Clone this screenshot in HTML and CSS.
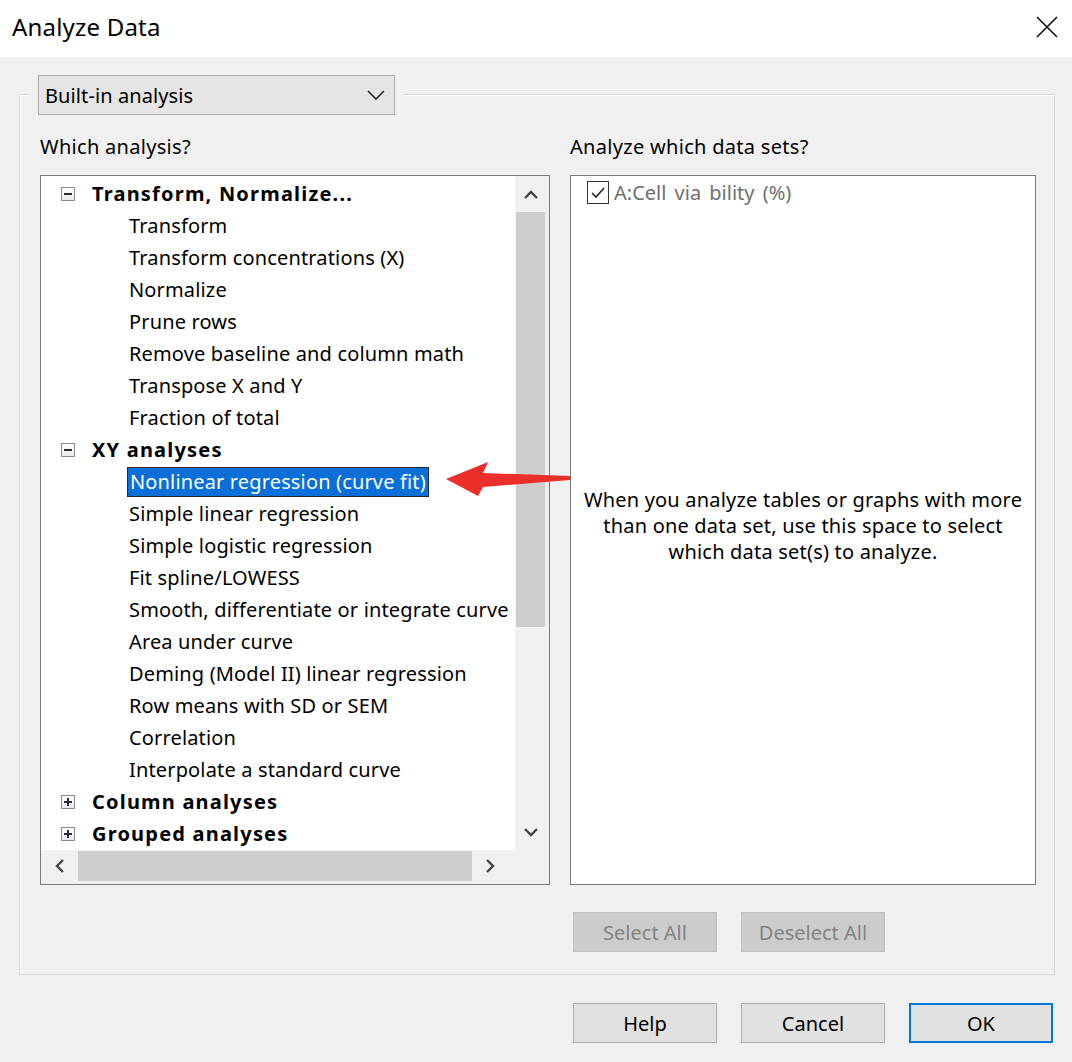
FILE: index.html
```html
<!DOCTYPE html>
<html>
<head>
<meta charset="utf-8">
<title>Analyze Data</title>
<link rel="stylesheet" href="styles.css">
</head>
<body>
<div class="window">
  <div class="titlebar">
    <span class="title">Analyze Data</span>
    <svg class="close" width="22" height="22" viewBox="0 0 22 22"><path d="M1 1 L21 21 M21 1 L1 21" stroke="#111" stroke-width="1.6" fill="none"/></svg>
  </div>
  <div class="body">
    <div class="group">
      <div class="combo-wrap">
        <div class="combo">
          <span>Built-in analysis</span>
          <svg width="18" height="10" viewBox="0 0 18 10"><path d="M1 1 L9 9 L17 1" stroke="#222" stroke-width="1.5" fill="none"/></svg>
        </div>
      </div>
      <div class="columns">
        <div class="col">
          <div class="label">Which analysis?</div>
          <div class="listbox tree-box">
            <div class="tree">
              <div class="row head"><span class="tog minus"></span>Transform, Normalize...</div>
              <div class="row child">Transform</div>
              <div class="row child">Transform concentrations (X)</div>
              <div class="row child">Normalize</div>
              <div class="row child">Prune rows</div>
              <div class="row child">Remove baseline and column math</div>
              <div class="row child">Transpose X and Y</div>
              <div class="row child">Fraction of total</div>
              <div class="row head"><span class="tog minus"></span>XY analyses</div>
              <div class="row child"><span class="sel">Nonlinear regression (curve fit)</span></div>
              <div class="row child">Simple linear regression</div>
              <div class="row child">Simple logistic regression</div>
              <div class="row child">Fit spline/LOWESS</div>
              <div class="row child">Smooth, differentiate or integrate curve</div>
              <div class="row child">Area under curve</div>
              <div class="row child">Deming (Model II) linear regression</div>
              <div class="row child">Row means with SD or SEM</div>
              <div class="row child">Correlation</div>
              <div class="row child">Interpolate a standard curve</div>
              <div class="row head"><span class="tog plus"></span>Column analyses</div>
              <div class="row head"><span class="tog plus"></span>Grouped analyses</div>
            </div>
            <div class="vscroll">
              <div class="arrow-btn"><svg width="14" height="9" viewBox="0 0 14 9"><path d="M1 8 L7 2 L13 8" stroke="#444" stroke-width="2.4" fill="none"/></svg></div>
              <div class="vthumb"></div>
              <div class="spacer"></div>
              <div class="arrow-btn"><svg width="14" height="9" viewBox="0 0 14 9"><path d="M1 1 L7 7 L13 1" stroke="#444" stroke-width="2.4" fill="none"/></svg></div>
            </div>
            <div class="hscroll">
              <div class="harrow"><svg width="9" height="14" viewBox="0 0 9 14"><path d="M8 1 L2 7 L8 13" stroke="#444" stroke-width="2.4" fill="none"/></svg></div>
              <div class="hthumb"></div>
              <div class="harrow"><svg width="9" height="14" viewBox="0 0 9 14"><path d="M1 1 L7 7 L1 13" stroke="#444" stroke-width="2.4" fill="none"/></svg></div>
            </div>
            <div class="corner"></div>
          </div>
        </div>
        <div class="col">
          <div class="label">Analyze which data sets?</div>
          <div class="listbox sets">
            <div class="set-row">
              <span class="check"><svg width="16" height="14" viewBox="0 0 16 14"><path d="M2 7 L6 11 L14 2" stroke="#222" stroke-width="1.6" fill="none"/></svg></span>
              <span class="set-text">A:Cell via bility (%)</span>
            </div>
            <div class="message">When you analyze tables or graphs with more<br>than one data set, use this space to select<br>which data set(s) to analyze.</div>
          </div>
          <div class="btn-row">
            <button class="btn disabled">Select All</button>
            <button class="btn disabled">Deselect All</button>
          </div>
        </div>
      </div>
    </div>
    <div class="footer">
      <button class="btn">Help</button>
      <button class="btn">Cancel</button>
      <button class="btn default">OK</button>
    </div>
  </div>
  <svg class="red-arrow" width="130" height="40" viewBox="0 0 130 40"><polygon points="1,18 43,1 38,12 125,15 125,19 38,26 33,35" fill="#ea2f2a"/></svg>
</div>
</body>
</html>
```

FILE: styles.css
```css
html, body {
  margin: 0;
  padding: 0;
}
body {
  width: 1072px;
  height: 1062px;
  background: #f0f0f0;
  font-family: "Noto Sans", "Open Sans", sans-serif;
  color: #000;
  overflow: hidden;
}
.window {
  position: relative;
  width: 1072px;
  height: 1062px;
}
.titlebar {
  height: 57px;
  background: #fff;
  display: flex;
  align-items: center;
  justify-content: space-between;
  padding: 0 14px 0 12px;
  box-sizing: border-box;
}
.title {
  font-size: 24px;
  letter-spacing: 0.2px;
  line-height: 30px;
  margin-top: -4px;
}
.close {
  margin-top: -4px;
}
.body {
  padding-top: 37px;
}
.group {
  margin-left: 19px;
  width: 1036px;
  box-sizing: border-box;
  border: 1px solid #d6d6d6;
  box-shadow: inset 1px 1px 0 #fff;
  padding: 0 18px 22px 20px;
}
.combo-wrap {
  margin-top: -20px;
  margin-left: -10px;
  padding: 0 8px;
  background: #f0f0f0;
  width: fit-content;
}
.combo {
  width: 357px;
  height: 40px;
  box-sizing: border-box;
  background: #e5e5e5;
  border: 1px solid #adadad;
  display: flex;
  align-items: center;
  justify-content: space-between;
  padding: 0 9px 0 6px;
  font-size: 20px;
  letter-spacing: 0.1px;
}
.columns {
  display: grid;
  grid-template-columns: 510px 466px;
  column-gap: 20px;
}
.label {
  margin-top: 18px;
  margin-bottom: 14px;
  height: 28px;
  line-height: 28px;
  font-size: 20px;
  letter-spacing: 0.3px;
}
.listbox {
  height: 710px;
  box-sizing: border-box;
  border: 1px solid #7a7a7a;
  background: #fff;
}
.tree-box {
  display: grid;
  grid-template-columns: 474px 34px;
  grid-template-rows: 674px 34px;
}
.tree {
  padding-top: 2px;
  overflow: hidden;
  white-space: nowrap;
}
.row {
  height: 32px;
  line-height: 32px;
  font-size: 20px;
  letter-spacing: 0.15px;
  display: flex;
  align-items: center;
}
.row.head {
  font-weight: bold;
  padding-left: 20px;
  letter-spacing: 1.2px;
}
.row.child {
  padding-left: 88px;
}
.tog {
  width: 14px;
  height: 14px;
  box-sizing: border-box;
  border: 1px solid #8c8c8c;
  background: linear-gradient(#fff, #e8e8ee);
  margin-right: 17px;
  position: relative;
  flex: none;
}
.tog::before {
  content: "";
  position: absolute;
  left: 2px;
  top: 5px;
  width: 8px;
  height: 2px;
  background: #2b2b3a;
}
.tog.plus::after {
  content: "";
  position: absolute;
  left: 5px;
  top: 2px;
  width: 2px;
  height: 8px;
  background: #2b2b3a;
}
.sel {
  background: #0a6fd8;
  color: #fff;
  height: 30px;
  line-height: 30px;
  margin-left: -2px;
  padding: 0 2px;
  box-sizing: border-box;
  outline: 1px dotted #1a1a1a;
  outline-offset: -1px;
  border: 1px solid #1c3b66;
  display: flex;
  align-items: center;
}
.vscroll {
  background: #f0f0f0;
  display: flex;
  flex-direction: column;
}
.arrow-btn {
  height: 36px;
  display: flex;
  align-items: center;
  justify-content: center;
  padding-right: 3px;
  flex: none;
}
.vthumb {
  height: 415px;
  margin: 0 4px 0 1px;
  background: #cdcdcd;
  flex: none;
}
.spacer {
  flex: 1;
}
.hscroll {
  background: #f0f0f0;
  display: flex;
  align-items: stretch;
}
.harrow {
  width: 37px;
  display: flex;
  align-items: center;
  justify-content: center;
  flex: none;
  padding-bottom: 3px;
}
.hthumb {
  width: 394px;
  margin: 1px 0 3px;
  background: #cdcdcd;
  flex: none;
}
.corner {
  background: #f0f0f0;
}
.sets {
  display: flex;
  flex-direction: column;
}
.set-row {
  display: flex;
  align-items: center;
  padding: 5px 0 0 16px;
  height: 23px;
}
.check {
  width: 22px;
  height: 23px;
  box-sizing: border-box;
  border: 1px solid #333;
  display: flex;
  align-items: center;
  justify-content: center;
  background: #fff;
}
.set-text {
  margin-left: 5px;
  font-size: 20px;
  color: #6f6f6f;
  word-spacing: 3px;
}
.message {
  flex: 1;
  display: flex;
  align-items: center;
  justify-content: center;
  text-align: center;
  font-size: 20px;
  letter-spacing: 0.2px;
  line-height: 26px;
  padding-bottom: 36px;
}
.btn-row {
  display: flex;
  gap: 24px;
  margin: 27px 0 0 3px;
}
.btn {
  width: 144px;
  height: 40px;
  box-sizing: border-box;
  border: 1px solid #adadad;
  background: #e1e1e1;
  font-family: "Noto Sans", "Open Sans", sans-serif;
  font-size: 20px;
  color: #000;
  padding: 0;
  margin: 0;
}
.btn.disabled {
  background: #cccccc;
  border-color: #bfbfbf;
  color: #838383;
}
.btn.default {
  border: 2px solid #0078d7;
}
.footer {
  display: flex;
  justify-content: flex-end;
  gap: 24px;
  padding-right: 19px;
  margin-top: 28px;
}
.red-arrow {
  position: absolute;
  left: 445px;
  top: 461px;
}
```
